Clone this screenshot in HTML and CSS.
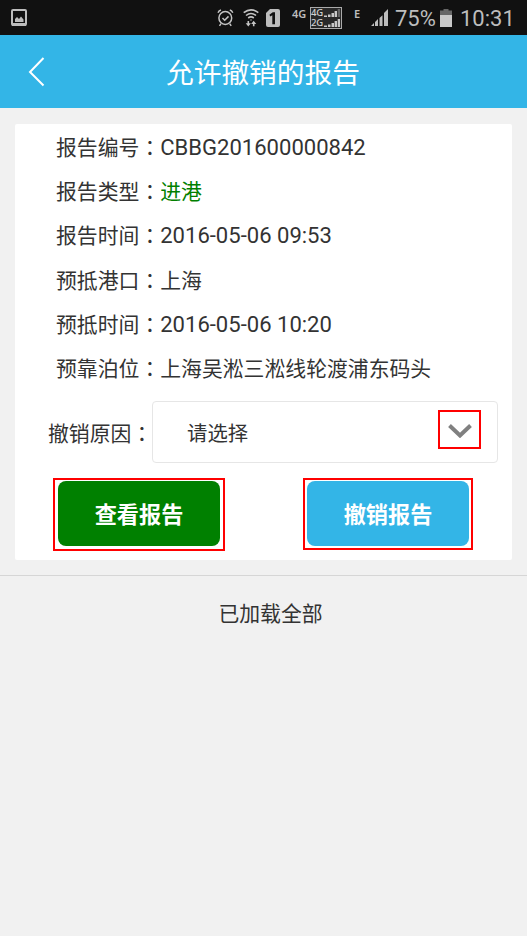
FILE: index.html
```html
<!DOCTYPE html>
<html lang="zh-CN">
<head>
<meta charset="utf-8">
<title>允许撤销的报告</title>
<link rel="stylesheet" href="styles.css">
</head>
<body>
<div class="status">
  <svg class="photo" width="16" height="18" viewBox="0 0 16 18"><rect x="1" y="1" width="14" height="15" rx="1" fill="none" stroke="#bdbdbd" stroke-width="2"/><path d="M1 15.500h14" stroke="#bdbdbd" stroke-width="3"/><path d="M4 13v-3l2-2 2 2 2-2.500 2.500 3V13z" fill="#bdbdbd"/></svg>
  <svg class="alarm" width="17" height="18" viewBox="0 0 17 18" fill="none" stroke="#c4c4c4" stroke-width="1.5"><circle cx="8.3" cy="9" r="6.4"/><path d="M1 3.7Q2 1.6 4 1M15.8 3.7Q14.8 1.6 12.8 1M4 14.6l-1.5 2.2M12.7 14.6l1.5 2.2M5.5 9l2.200 2.200 3.800-3.800"/></svg>
  <svg class="wifi" width="16" height="18" viewBox="0 0 16 18" fill="none" stroke="#c4c4c4" stroke-width="1.6"><path d="M.7 3.7Q8-2 15.3 3.7M3 6.5q5-4 10 0M5.2 9q2.8-2.2 5.6 0"/><circle cx="8" cy="11" r=".7" fill="#c4c4c4" stroke="none"/><path d="M5.3 12v4M10.700 17.200v-4"/><path d="M2.700 14.300h5.200l-2.600 3.200zM8.100 15h5.200l-2.600-3.200z" fill="#c4c4c4" stroke="none"/></svg>
  <svg class="sim" width="14" height="19" viewBox="0 0 14 19"><path d="M4 0h8q2 0 2 2v14q0 2-2 2H2q-2 0-2-2V4z" fill="#bdbdbd"/><path d="M3.400 5.800 6.800 3.200h2.200V15.300H6.300V6.300L4.300 7.500z" fill="#111"/></svg>
  <span class="net">4G</span>
  <div class="dual">
    <div class="line"><span>4G</span><svg width="17" height="8" viewBox="0 0 17 8" fill="#c8c8c8"><path d="M0 6.500h3V8H0zM4 5.500h2.500V8H4zM7.500 4H10v4H7.500zM10.600 2H13v6h-2.400z"/><path d="M13.700 0H16v8h-2.300z" fill="#666"/></svg></div>
    <div class="line"><span>2G</span><svg width="17" height="8" viewBox="0 0 17 8" fill="#c8c8c8"><path d="M0 6.500h3V8H0zM4 5.500h2.500V8H4zM7.500 4H10v4H7.500zM10.600 2H13v6h-2.400zM13.700 0H16v8h-2.300z"/></svg></div>
  </div>
  <span class="edge">E</span>
  <svg class="signal" width="17" height="18" viewBox="0 0 17 18" fill="#bdbdbd"><path d="M0 17 3 14v3zM4 13l3-3v7H4zM8.500 9l3-2.700V17h-3zM13 4l4-4v17h-4z"/></svg>
  <span class="pct">75%</span>
  <svg class="battery" width="12" height="18" viewBox="0 0 12 18"><path d="M3.500 0h5v1.500H12v4.500H0V1.500h3.500z" fill="#666"/><path d="M0 6h12v12H0z" fill="#c8c8c8"/></svg>
  <span class="clock">10:31</span>
</div>
<header class="header">
  <svg class="back" width="18" height="32" viewBox="0 0 18 32"><path d="M15.500 2 2 16 15.500 29.500" fill="none" stroke="#fff" stroke-width="2"/></svg>
  <h1 class="title">允许撤销的报告</h1>
</header>
<main class="card">
  <div class="row"><span>报告编号</span><span class="colon">：</span><span class="latin">CBBG201600000842</span></div>
  <div class="row"><span>报告类型</span><span class="colon">：</span><span class="green">进港</span></div>
  <div class="row"><span>报告时间</span><span class="colon">：</span><span class="latin">2016-05-06 09:53</span></div>
  <div class="row"><span>预抵港口</span><span class="colon">：</span><span>上海</span></div>
  <div class="row"><span>预抵时间</span><span class="colon">：</span><span class="latin">2016-05-06 10:20</span></div>
  <div class="row"><span>预靠泊位</span><span class="colon">：</span><span>上海吴淞三淞线轮渡浦东码头</span></div>
  <div class="reason">
    <div class="label"><span>撤销原因</span><span class="colon">：</span></div>
    <div class="select"><span>请选择</span>
      <div class="arrow"><svg width="24" height="16" viewBox="0 0 24 16"><path d="M1.500 3.500 12 13.500 22.500 3.500" fill="none" stroke="#808080" stroke-width="4"/></svg></div>
    </div>
  </div>
  <div class="actions">
    <div class="frame view"><button class="btn">查看报告</button></div>
    <div class="frame revoke"><button class="btn">撤销报告</button></div>
  </div>
</main>
<footer class="footer">已加载全部</footer>
</body>
</html>
```
FILE: styles.css
```css
* { box-sizing: border-box; }
body {
  margin: 0;
  min-height: 936px;
  background: #f1f1f1;
  color: #333;
  font: 20.85px/1 "Noto Sans CJK SC", sans-serif;
}
svg { display: block; flex: none; }
span { white-space: nowrap; }
.status {
  display: flex;
  height: 35px;
  padding: 9px 0 0 11px;
  background: #111;
  color: #bdbdbd;
  font-family: Roboto, sans-serif;
}
.alarm { margin-left: 190px; }
.wifi { margin-left: 9px; }
.sim { margin-left: 7px; }
.net { width: 18px; margin-left: 12px; font: 600 11px/10px "Noto Sans", sans-serif; }
.dual {
  flex: none;
  width: 32px;
  height: 22px;
  margin-top: -2px;
  border: 1px solid #aaa;
  background: #292929;
  color: #d0d0d0;
}
.line { display: flex; align-items: center; height: 10px; }
.line span { width: 14px; font: 500 9.5px/10px "Noto Sans", sans-serif; letter-spacing: -.3px; }
.edge { width: 17px; margin-left: 12px; font: 600 11px/10px "Noto Sans", sans-serif; }
.pct { width: 45px; margin-left: 7px; font-size: 22px; line-height: 20px; }
.clock { margin-left: 8px; font-size: 22px; line-height: 20px; }
.header {
  display: flex;
  align-items: center;
  height: 73px;
  padding-left: 28px;
  background: #33b5e7;
  color: #fff;
}
.title { margin: -2px 0 0 120px; font-size: 27.7px; font-weight: 400; line-height: 40px; }
.card {
  height: 436px;
  margin: 16px 15px 15px;
  border-radius: 2px;
  background: #fff;
}
.row {
  display: flex;
  align-items: center;
  height: 44.2px;
  padding-left: 41px;
}
.row > span { line-height: 30px; }
.colon { font-family: "Noto Sans CJK TC", sans-serif; }
.row .latin { padding-top: 4px; font-family: Roboto, sans-serif; font-size: 22.05px; }
.green { color: #008000; }
.reason { display: flex; align-items: center; margin-top: 12px; padding-left: 33px; }
.label { display: flex; width: 104px; line-height: 30px; padding-bottom: 1px; }
.select {
  display: flex;
  align-items: center;
  width: 346px;
  height: 62px;
  padding: 0 16px 0 34px;
  border: 1px solid #e6e6e6;
  border-radius: 4px;
  font-size: 20.4px;
}
.select > span { padding-top: 1px; }
.arrow {
  display: grid;
  place-items: center;
  width: 43px;
  height: 39px;
  margin: -5px 0 0 auto;
  border: 2px solid #f00;
}
.actions { display: flex; align-items: flex-start; margin-top: 15px; padding-left: 38px; }
.frame { display: flex; height: 73px; border: 2px solid #f00; }
.view { width: 172px; padding: 1px 3px; }
.revoke { width: 170px; height: 72px; margin-left: 78px; padding: 1px 2px; }
.btn {
  width: 162px;
  height: 65px;
  padding: 0 0 2px;
  border: 0;
  border-radius: 8px;
  background: #008000;
  color: #fff;
  font: bold 22.2px/30px "Noto Sans CJK SC", sans-serif;
}
.revoke .btn { background: #33b5e7; }
.footer {
  padding: 21px 0 0 14px;
  border-top: 1px solid #d6d6d6;
  line-height: 30px;
  text-align: center;
}
```
